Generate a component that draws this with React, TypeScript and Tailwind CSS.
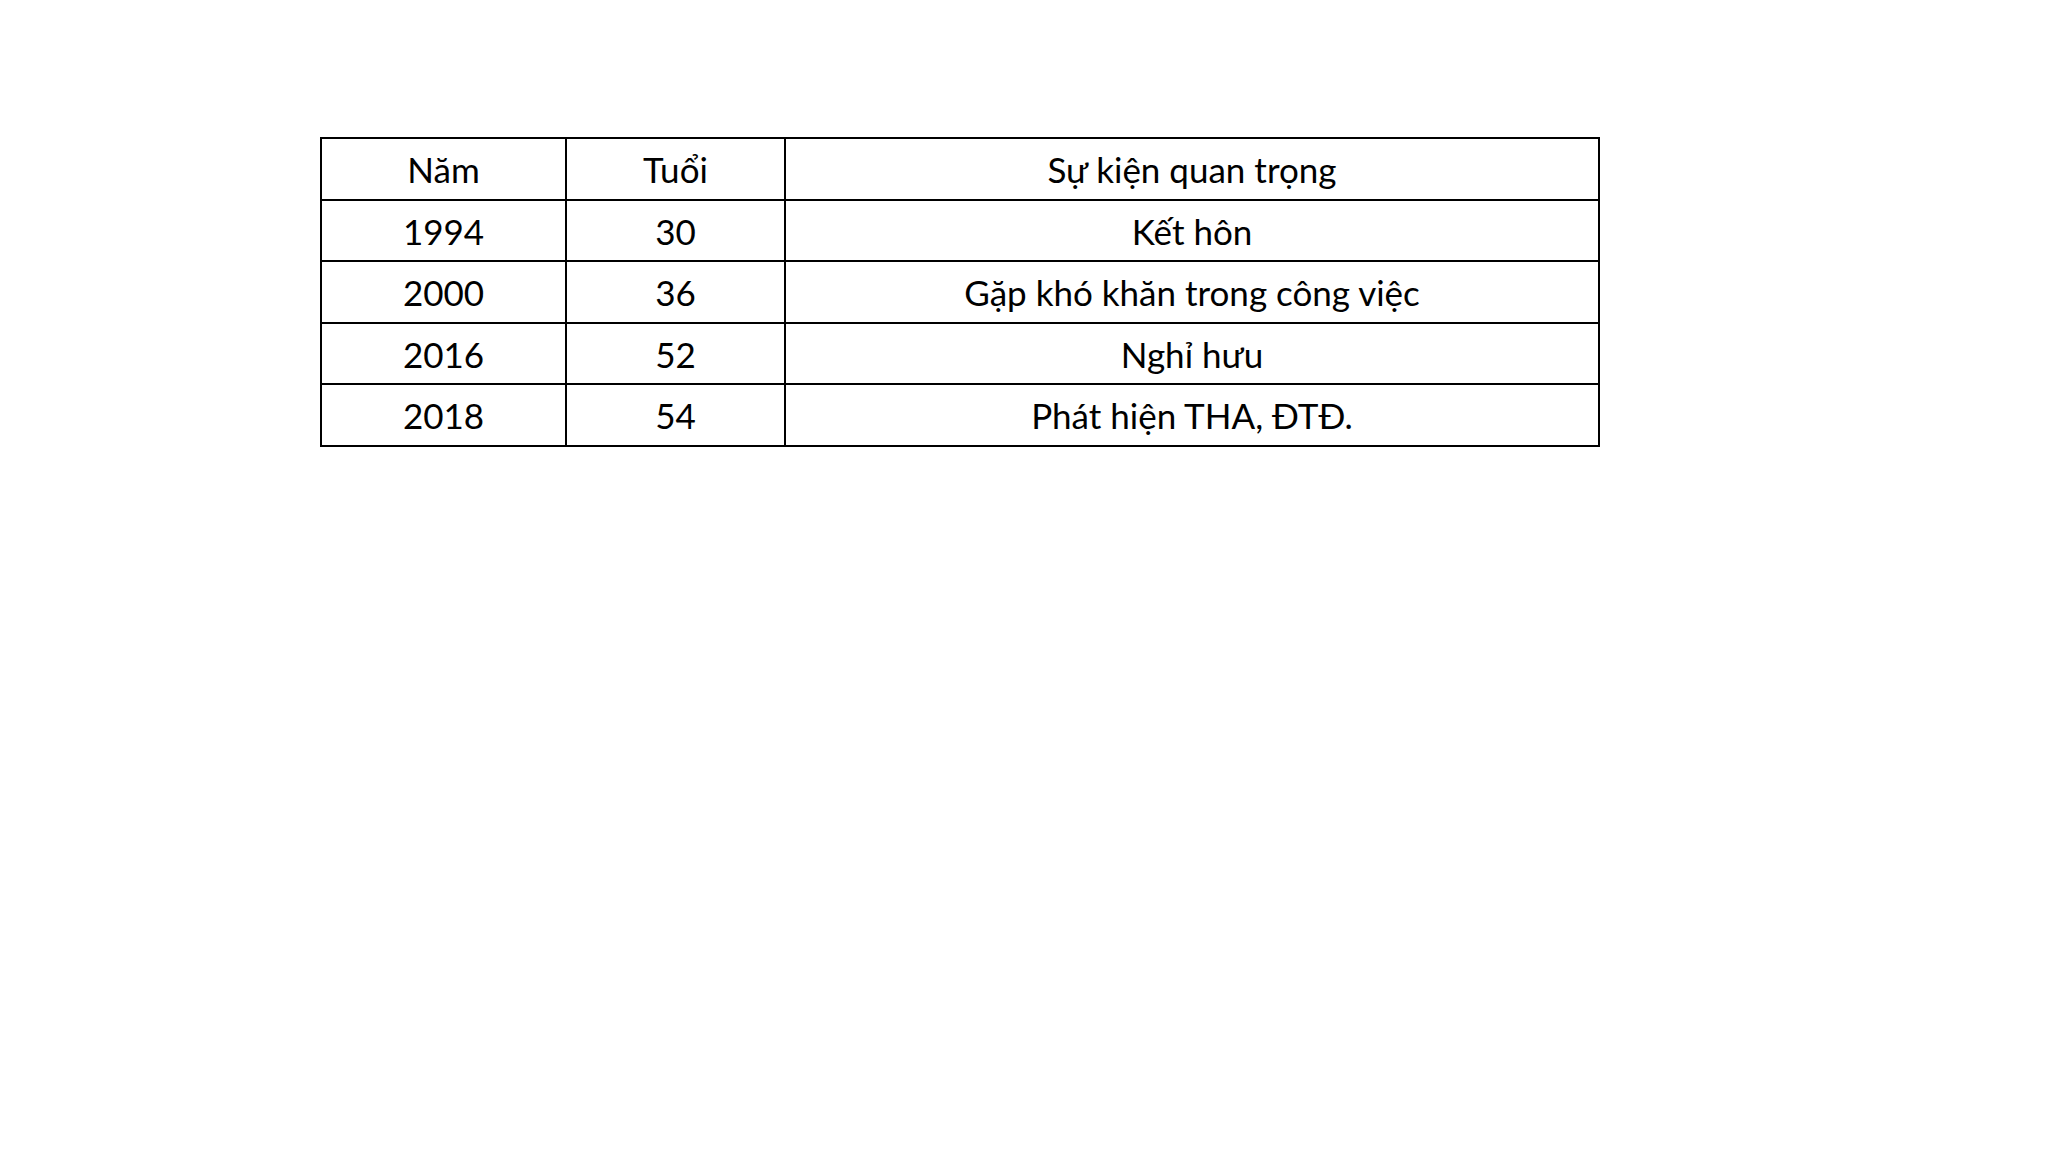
const ROWS: [string, string, string][] = [
  ['Năm', 'Tuổi', 'Sự kiện quan trọng'],
  ['1994', '30', 'Kết hôn'],
  ['2000', '36', 'Gặp khó khăn trong công việc'],
  ['2016', '52', 'Nghỉ hưu'],
  ['2018', '54', 'Phát hiện THA, ĐTĐ.'],
];

export default function App() {
  return (
    <div className="w-[2048px] h-[1152px] bg-white overflow-hidden pt-[137px] pl-[320px] font-['Lato','Open_Sans',sans-serif] text-black">
      <div className="grid grid-cols-[245px_219px_814px] w-[1280px] border-l-2 border-t-2 border-black">
        {ROWS.map((row, i) =>
          row.map((cell, j) => (
            <div
              key={`${i}-${j}`}
              className="h-[61.5px] flex items-center justify-center pt-[2px] border-r-2 border-b-2 border-black text-[35px] leading-none"
            >
              {cell}
            </div>
          )),
        )}
      </div>
    </div>
  );
}
